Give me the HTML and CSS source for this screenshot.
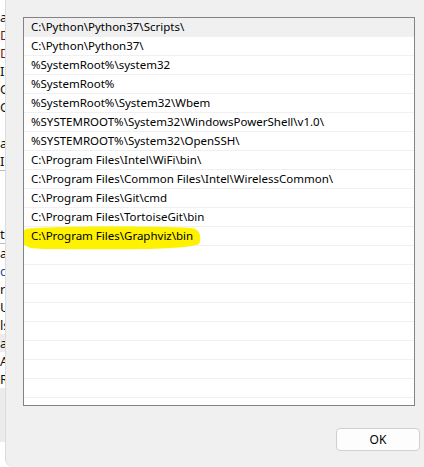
FILE: index.html
```html
<!DOCTYPE html>
<html>
<head>
<meta charset="utf-8">
<link rel="stylesheet" href="styles.css">
</head>
<body>
<div class="page">
  <div class="behind">
    <div class="b-row">a</div>
    <div class="b-row red">D</div>
    <div class="b-row red">D</div>
    <div class="b-row">IC</div>
    <div class="b-row">Or</div>
    <div class="b-row">Or</div>
    <div class="b-row gap"></div>
    <div class="b-row">a</div>
    <div class="b-row sep">IC</div>
    <div class="b-row gap"></div>
    <div class="b-row gap"></div>
    <div class="b-row gap"></div>
    <div class="b-row sep">te</div>
    <div class="b-row">a</div>
    <div class="b-row blue">c</div>
    <div class="b-row">r</div>
    <div class="b-row">U</div>
    <div class="b-row">ls</div>
    <div class="b-row grey">a</div>
    <div class="b-row">A</div>
    <div class="b-row">R</div>
    <div class="b-row grey gap"></div>
    <div class="b-row grey gap"></div>
    <div class="b-row grey gap"></div>
  </div>
  <div class="dialog">
    <div class="listbox">
      <div class="row selected">C:\Python\Python37\Scripts\</div>
      <div class="row">C:\Python\Python37\</div>
      <div class="row">%SystemRoot%\system32</div>
      <div class="row">%SystemRoot%</div>
      <div class="row">%SystemRoot%\System32\Wbem</div>
      <div class="row">%SYSTEMROOT%\System32\WindowsPowerShell\v1.0\</div>
      <div class="row">%SYSTEMROOT%\System32\OpenSSH\</div>
      <div class="row">C:\Program Files\Intel\WiFi\bin\</div>
      <div class="row">C:\Program Files\Common Files\Intel\WirelessCommon\</div>
      <div class="row">C:\Program Files\Git\cmd</div>
      <div class="row">C:\Program Files\TortoiseGit\bin</div>
      <div class="row marked">
        <svg class="marker" width="180" height="25" viewBox="0 0 180 25">
          <path d="M4 3 C 30 0, 120 0, 170 2 C 178 3, 180 12, 177 18 C 168 23, 110 24, 40 23 C 18 23, 4 24, 1 17 C -1 11, 0 5, 4 3 Z" fill="#fff200"/>
        </svg>
        <span class="txt">C:\Program Files\Graphviz\bin</span>
      </div>
      <div class="row"></div>
      <div class="row"></div>
      <div class="row"></div>
      <div class="row"></div>
      <div class="row"></div>
      <div class="row"></div>
      <div class="row"></div>
      <div class="row"></div>
      <div class="row"></div>
    </div>
    <div class="footer">
      <button class="btn">OK</button>
    </div>
  </div>
</div>
</body>
</html>
```
FILE: styles.css
```css
html, body {
  margin: 0;
  padding: 0;
  background: #ffffff;
}
.page {
  display: flex;
  width: 424px;
  height: 467px;
  overflow: hidden;
  font-family: "Noto Sans", "Open Sans", "Liberation Sans", sans-serif;
  font-size: 11.5px;
  color: #000;
}
.behind {
  width: 5px;
  flex: none;
  overflow: hidden;
  background: #ffffff;
  padding-top: 8px;
  box-sizing: border-box;
}
.b-row {
  height: 18px;
  line-height: 18px;
  font-size: 13px;
  white-space: nowrap;
  color: #111;
}
.b-row.red { color: #6b1a1a; }
.b-row.blue { color: #2a4f9a; }
.b-row.sep { border-bottom: 1px solid #bdbdbd; }
.b-row.grey { background: #ececec; }
.dialog {
  flex: 1;
  display: flex;
  flex-direction: column;
  background: #f0f0f0;
  border-left: 1px solid #dcdcdc;
  border-bottom-left-radius: 8px;
  padding: 17px 9px 0 17px;
  box-sizing: border-box;
}
.listbox {
  height: 389px;
  flex: none;
  border: 1px solid #838383;
  background: #ffffff;
  overflow: hidden;
  box-sizing: border-box;
}
.row {
  height: 19px;
  line-height: 18px;
  border-bottom: 1px solid #f0f0f0;
  box-sizing: border-box;
  padding-left: 7px;
  white-space: nowrap;
  position: relative;
}
.row.selected {
  background: #f0f0f0;
}
.marker {
  position: absolute;
  left: -2px;
  top: -1px;
}
.txt {
  position: relative;
}
.footer {
  display: flex;
  justify-content: flex-end;
  padding-top: 22px;
  margin-right: -5px;
}
.btn {
  width: 84px;
  height: 23px;
  background: #fdfdfd;
  border: 1px solid #d0d0d0;
  border-radius: 4px;
  font-family: "Noto Sans", "Open Sans", "Liberation Sans", sans-serif;
  font-size: 12px;
  color: #000;
  padding: 0;
}
```
